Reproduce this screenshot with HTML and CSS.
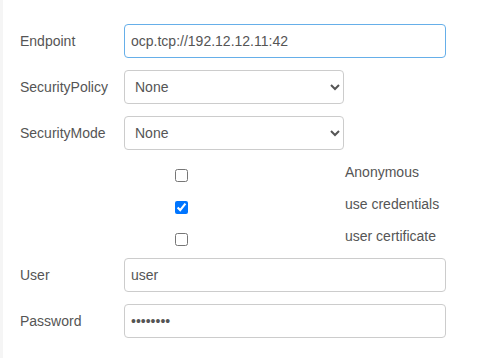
FILE: index.html
```html
<!DOCTYPE html>
<html lang="en">
<head>
    <meta charset="UTF-8">
    <meta name="viewport" content="width=device-width, initial-scale=1.0">
    <title>Connection</title>
    <link rel="stylesheet" href="styles.css">
</head>
<body>
    <div class="panel">
        <form class="conn-form">
            <div class="form-row">
                <label class="form-label" for="endpoint">Endpoint</label>
                <input class="form-input is-focused" id="endpoint" type="text" value="ocp.tcp://192.12.12.11:42">
            </div>
            <div class="form-row">
                <label class="form-label" for="policy">SecurityPolicy</label>
                <select class="form-select" id="policy">
                    <option>None</option>
                    <option>Basic128Rsa15</option>
                    <option>Basic256</option>
                </select>
            </div>
            <div class="form-row">
                <label class="form-label" for="mode">SecurityMode</label>
                <select class="form-select" id="mode">
                    <option>None</option>
                    <option>Sign</option>
                    <option>SignAndEncrypt</option>
                </select>
            </div>

            <div class="check-row">
                <input class="check-box" type="checkbox" id="anon">
                <label class="check-label" for="anon">Anonymous</label>
            </div>
            <div class="check-row">
                <input class="check-box" type="checkbox" id="creds" checked>
                <label class="check-label" for="creds">use credentials</label>
            </div>
            <div class="check-row">
                <input class="check-box" type="checkbox" id="cert">
                <label class="check-label" for="cert">user certificate</label>
            </div>

            <div class="form-row">
                <label class="form-label" for="user">User</label>
                <input class="form-input" id="user" type="text" value="user">
            </div>
            <div class="form-row">
                <label class="form-label" for="password">Password</label>
                <input class="form-input" id="password" type="password" value="password">
            </div>
        </form>
    </div>
</body>
</html>
```

FILE: styles.css
```css
:root {
    --text: #555;
    --border: #ccc;
    --focus: #66afe9;
    --radius: 4px;
}

body {
    margin: 0;
    background: #fff;
    font-family: 'Liberation Sans', Arial, sans-serif;
    font-size: 14px;
    color: var(--text);
}

.panel {
    min-height: 100vh;
    box-sizing: border-box;
    border-left: 3px solid #f5f5f5;
    padding: 24px 0 0 17px;
}

.conn-form {
    display: flex;
    flex-direction: column;
    gap: 12px;
}

.form-row {
    display: grid;
    grid-template-columns: 104px 322px;
    align-items: center;
}

.form-label {
    line-height: 20px;
}

.form-input,
.form-select {
    box-sizing: border-box;
    height: 34px;
    margin: 0;
    padding: 6px;
    border: 1px solid var(--border);
    border-radius: var(--radius);
    background: #fff;
    font-family: inherit;
    font-size: 14px;
    color: var(--text);
    outline: none;
}

.form-input.is-focused,
.form-input:focus {
    border-color: var(--focus);
}

.form-select {
    width: 220px;
    padding-left: 6px;
}

/* fila de checkbox */
.check-row {
    display: grid;
    grid-template-columns: 155px 170px auto;
    height: 20px;
}

.check-box {
    grid-column: 2;
    width: 13px;
    height: 13px;
    margin: 7px 0 0;
}

.check-label {
    grid-column: 3;
    line-height: 20px;
}
```
